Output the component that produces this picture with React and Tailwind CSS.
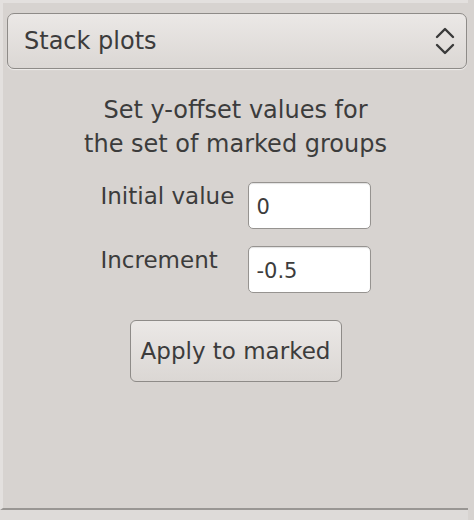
import React from 'react';

const font = { fontFamily: '"DejaVu Sans", "Open Sans", sans-serif' };

function Chevrons() {
  return (
    <svg width="20" height="28" viewBox="0 0 20 28" fill="none" stroke="#3a3a3a" strokeWidth="2.4" strokeLinecap="round" strokeLinejoin="round">
      <path d="M2 10 L10 2 L18 10" />
      <path d="M2 18 L10 26 L18 18" />
    </svg>
  );
}

function Field({ label, value }) {
  return (
    <div className="flex items-start">
      <span className="w-[147px] whitespace-nowrap leading-[28px] text-[23px]">{label}</span>
      <div className="w-[123px] h-[47px] rounded-[5px] border border-[#969390] bg-white px-[8px] pt-[10px] shadow-[inset_0_1px_1px_rgba(0,0,0,0.12)]">
        <span className="block leading-[28px] text-[21px]">{value}</span>
      </div>
    </div>
  );
}

export default function App() {
  return (
    <div className="w-[474px] h-[520px] bg-[#d7d3d0] text-[#3c3c3c] text-[23px]" style={font}>
      <div className="w-[468px] h-[510px] flex flex-col border-l-[3px] border-t-[3px] border-l-[#e3e0de] border-t-[#e3e0de] border-b-[2px] border-b-[#999693]">
        <div className="ml-[4px] mt-[10px] w-[460px] h-[56px] rounded-[7px] border border-[#8e8b88] bg-gradient-to-b from-[#ebe8e6] to-[#dbd7d4] shadow-[0_1px_1px_rgba(255,255,255,0.6)] flex items-center justify-between pl-[16px] pr-[11px]">
          <span className="text-[24px]">Stack plots</span>
          <Chevrons />
        </div>

        <div className="flex flex-col items-center mt-[24px]">
          <p className="text-center leading-[34px] text-[24px]">
            Set y-offset values for<br />the set of marked groups
          </p>
          <div className="flex flex-col gap-[17px] mt-[21px]">
            <Field label="Initial value" value="0" />
            <Field label="Increment" value="-0.5" />
          </div>
          <button className="mt-[27px] w-[212px] h-[62px] rounded-[6px] border border-[#8e8b88] bg-gradient-to-b from-[#ebe8e6] to-[#dbd7d4] text-[#3c3c3c]">
            Apply to marked
          </button>
        </div>
      </div>
      <div className="w-[468px] h-[10px] bg-[#dedbd9]" />
    </div>
  );
}
